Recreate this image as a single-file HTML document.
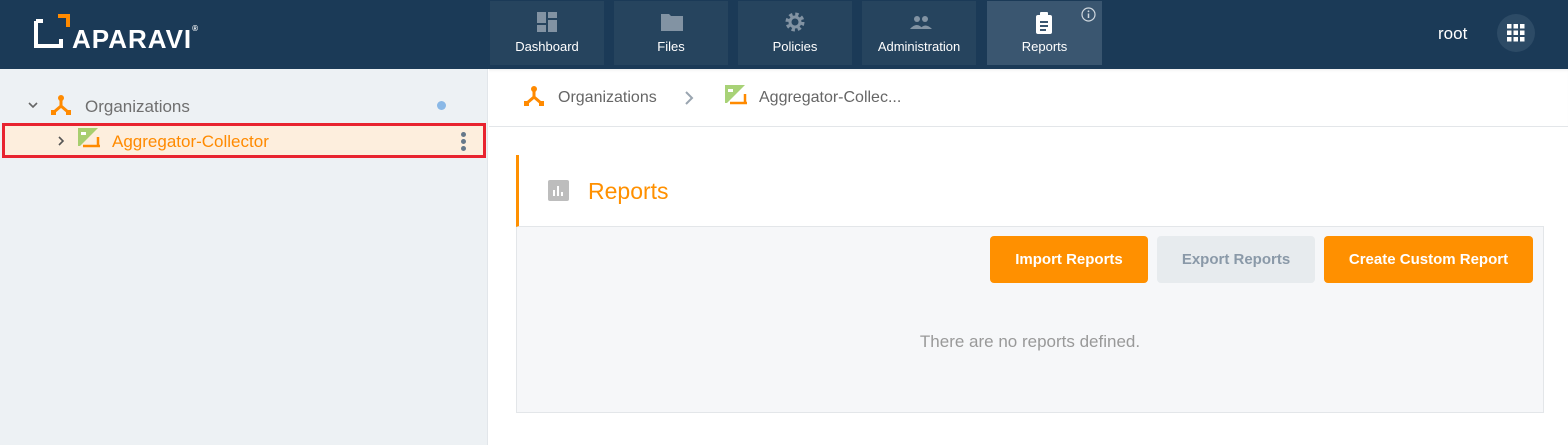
<!DOCTYPE html>
<html><head><style>
*{box-sizing:border-box;margin:0;padding:0}
body{width:1568px;height:445px;overflow:hidden;font-family:"Liberation Sans",sans-serif;background:#fff;position:relative}
.hdr{position:absolute;left:0;top:0;width:1568px;height:69px;background:#1b3a57}
.tile{position:absolute;top:1px;width:114px;height:64px;background:#26445e;color:#fff;font-size:13px;text-align:center}
.tile span{position:absolute;left:0;right:0;top:38px}
.tile svg{position:absolute;left:47px;top:11px}
.side{position:absolute;left:0;top:69px;width:488px;height:376px;background:#edf1f4;border-right:1px solid #e2e6ea}
.btn{position:absolute;top:236px;height:47px;border-radius:4px;background:#ff9000;color:#fff;font-size:15px;font-weight:bold;text-align:center;line-height:47px}
</style></head><body>
<div class="hdr">
 <svg style="position:absolute;left:33px;top:13px" width="40" height="36" viewBox="0 0 40 36"><path d="M3 8 V33 H28 V26" fill="none" stroke="#fff" stroke-width="4"/><path d="M3 8 H10" stroke="#fff" stroke-width="4"/><path d="M25 3 H35 V14" fill="none" stroke="#ff8a00" stroke-width="4"/></svg>
 <div style="position:absolute;left:72px;top:24px;color:#fff;font-size:26px;font-weight:bold;letter-spacing:1px">APARAVI<sup style="font-size:8px;vertical-align:top">®</sup></div>
 <div class="tile" style="left:490px"><svg width="20" height="20"><rect x="0" y="0" width="9" height="11" fill="#8293a3"/><rect x="11" y="0" width="9" height="6" fill="#8293a3"/><rect x="0" y="13" width="9" height="7" fill="#8293a3"/><rect x="11" y="8" width="9" height="12" fill="#8293a3"/></svg><span>Dashboard</span></div>
 <div class="tile" style="left:614px"><svg width="22" height="20"><path d="M0 2 H8 L10 4 H22 V19 H0Z" fill="#8293a3"/></svg><span>Files</span></div>
 <div class="tile" style="left:738px"><svg width="20" height="20"><circle cx="10" cy="10" r="7" fill="none" stroke="#8293a3" stroke-width="5" stroke-dasharray="3 2.5"/><circle cx="10" cy="10" r="5" fill="none" stroke="#8293a3" stroke-width="3"/></svg><span>Policies</span></div>
 <div class="tile" style="left:862px"><svg width="24" height="20"><circle cx="8" cy="7" r="3" fill="#8293a3"/><circle cx="16" cy="7" r="3" fill="#8293a3"/><path d="M1 17 Q8 9 14 17Z M11 17 Q16 10 23 17Z" fill="#8293a3"/></svg><span>Administration</span></div>
 <div class="tile" style="left:987px;background:#3a5670;width:115px"><svg width="20" height="22"><rect x="2" y="3" width="16" height="19" rx="2" fill="#fff"/><rect x="6" y="0" width="8" height="5" rx="1" fill="#fff"/><path d="M6 10h8M6 14h8M6 18h6" stroke="#3a5670" stroke-width="2"/></svg><span>Reports</span>
 <svg style="position:absolute;left:94px;top:6px" width="15" height="15"><circle cx="7.5" cy="7.5" r="6.5" fill="none" stroke="#cfd7de" stroke-width="1.2"/><path d="M7.5 6.5v4.5" stroke="#cfd7de" stroke-width="1.5"/><circle cx="7.5" cy="4.3" r="0.9" fill="#cfd7de"/></svg></div>
 <div style="position:absolute;left:1438px;top:24px;color:#fff;font-size:17px">root</div>
 <div style="position:absolute;left:1497px;top:14px;width:38px;height:38px;border-radius:50%;background:#2d4b66"><svg style="position:absolute;left:10px;top:10px" width="18" height="18"><g fill="#fff"><rect x="0" y="0" width="4.5" height="4.5"/><rect x="6.5" y="0" width="4.5" height="4.5"/><rect x="13" y="0" width="4.5" height="4.5"/><rect x="0" y="6.5" width="4.5" height="4.5"/><rect x="6.5" y="6.5" width="4.5" height="4.5"/><rect x="13" y="6.5" width="4.5" height="4.5"/><rect x="0" y="13" width="4.5" height="4.5"/><rect x="6.5" y="13" width="4.5" height="4.5"/><rect x="13" y="13" width="4.5" height="4.5"/></g></svg></div>
</div>
<div class="side">
 <svg style="position:absolute;left:28px;top:33px" width="10" height="7"><path d="M1 1L5 5L9 1" stroke="#666" stroke-width="1.6" fill="none"/></svg>
 <svg style="position:absolute;left:50px;top:25px" width="22" height="22"><circle cx="11" cy="4" r="3" fill="#ff8a00"/><path d="M11 6V12L4 18M11 12L18 18" stroke="#ff8a00" stroke-width="3" fill="none"/><rect x="1" y="16" width="5" height="5" fill="#ff8a00"/><rect x="16" y="16" width="5" height="5" fill="#ff8a00"/></svg>
 <div style="position:absolute;left:85px;top:28px;color:#6f6f6f;font-size:17px">Organizations</div>
 <div style="position:absolute;left:437px;top:32px;width:9px;height:9px;border-radius:50%;background:#8ab8e6"></div>
 <div style="position:absolute;left:2px;top:54px;width:484px;height:35px;background:#fdeedd;border:3px solid #e8232f"></div>
 <svg style="position:absolute;left:58px;top:67px" width="7" height="10"><path d="M1 1L5 5L1 9" stroke="#555" stroke-width="1.6" fill="none"/></svg>
 <svg style="position:absolute;left:78px;top:59px" width="24" height="20"><path d="M0 0H20L2 18H0Z" fill="#8bc34a" opacity=".75"/><rect x="3" y="4" width="5" height="3" fill="#fff"/><path d="M5 18H22M20 9V18" stroke="#ff8a00" stroke-width="2.5" fill="none"/></svg>
 <div style="position:absolute;left:112px;top:63px;color:#ff8a00;font-size:17px">Aggregator-Collector</div>
 <div style="position:absolute;left:461px;top:63px;width:5px"><div style="width:5px;height:5px;border-radius:50%;background:#66788a;margin-bottom:2px"></div><div style="width:5px;height:5px;border-radius:50%;background:#66788a;margin-bottom:2px"></div><div style="width:5px;height:5px;border-radius:50%;background:#66788a"></div></div>
</div>
<div style="position:absolute;left:489px;top:69px;width:1079px;height:58px;border-bottom:1px solid #e3e6e9;box-shadow:inset 0 3px 3px -2px rgba(0,0,0,.08)">
 <svg style="position:absolute;left:34px;top:16px" width="22" height="22"><circle cx="11" cy="4" r="3" fill="#ff8a00"/><path d="M11 6V12L4 18M11 12L18 18" stroke="#ff8a00" stroke-width="3" fill="none"/><rect x="1" y="16" width="5" height="5" fill="#ff8a00"/><rect x="16" y="16" width="5" height="5" fill="#ff8a00"/></svg>
 <div style="position:absolute;left:69px;top:20px;color:#666;font-size:16px">Organizations</div>
 <svg style="position:absolute;left:196px;top:22px" width="9" height="14"><path d="M1 1L7 7L1 13" stroke="#9aa5b0" stroke-width="2" fill="none"/></svg>
 <svg style="position:absolute;left:236px;top:16px" width="24" height="20"><path d="M0 0H20L2 18H0Z" fill="#8bc34a" opacity=".75"/><rect x="3" y="4" width="5" height="3" fill="#fff"/><path d="M5 18H22M20 9V18" stroke="#ff8a00" stroke-width="2.5" fill="none"/></svg>
 <div style="position:absolute;left:270px;top:20px;color:#666;font-size:16px">Aggregator-Collec...</div>
</div>
<div style="position:absolute;left:516px;top:155px;width:1028px;height:258px;border:1px solid #e3e6e9;background:#f6f7f9">
 <div style="position:absolute;left:-1px;top:-1px;width:1028px;height:72px;background:#fff;border-left:3px solid #ff9000;border-bottom:1px solid #e3e6e9">
  <svg style="position:absolute;left:29px;top:25px" width="21" height="21"><rect width="21" height="21" rx="2" fill="#bdbdbd"/><path d="M6 16V10M10 16V6M14 16V12" stroke="#fff" stroke-width="2"/></svg>
  <div style="position:absolute;left:69px;top:23px;color:#ff9000;font-size:23px">Reports</div>
 </div>
 <div style="position:absolute;left:0;right:0;top:176px;text-align:center;color:#999;font-size:17px">There are no reports defined.</div>
</div>
<div class="btn" style="left:990px;width:158px">Import Reports</div>
<div class="btn" style="left:1157px;width:158px;background:#e7ebee;color:#8a99a8">Export Reports</div>
<div class="btn" style="left:1324px;width:209px">Create Custom Report</div>
</body></html>
